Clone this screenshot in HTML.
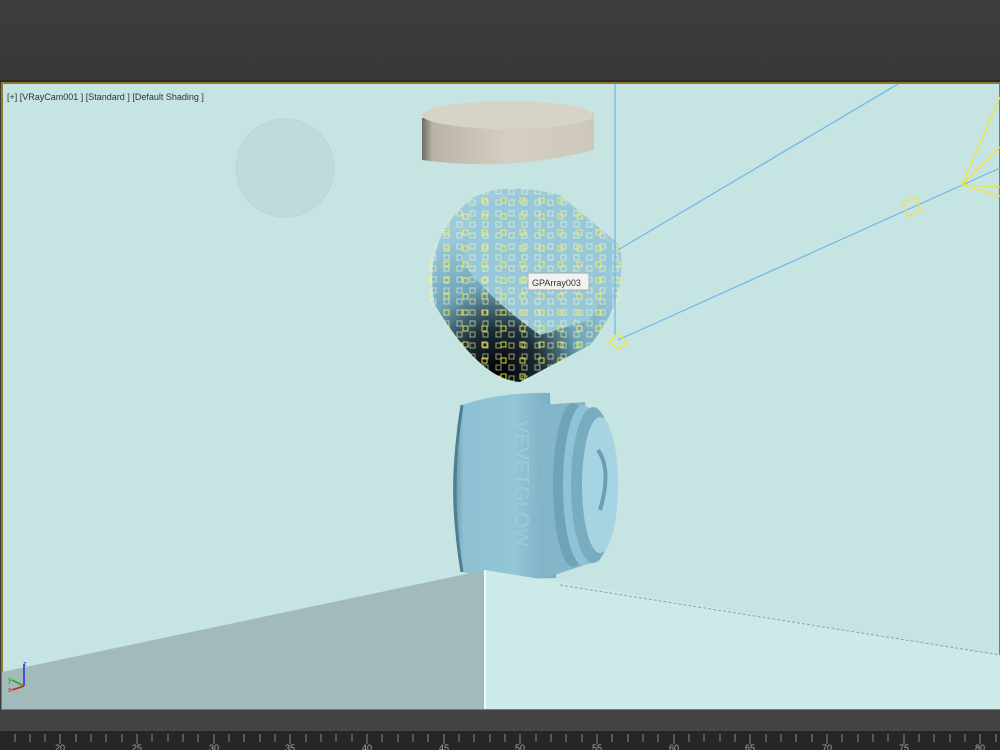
<!DOCTYPE html>
<html><head><meta charset="utf-8"><style>
html,body{margin:0;padding:0;width:1000px;height:750px;overflow:hidden;background:#3b3b3b;font-family:"Liberation Sans",sans-serif}
</style></head><body>
<svg width="1000" height="750" viewBox="0 0 1000 750" xmlns="http://www.w3.org/2000/svg" style="position:absolute;left:0;top:0">
<defs>
<linearGradient id="top" x1="0" y1="0" x2="0" y2="1"><stop offset="0" stop-color="#3d3d3d"/><stop offset="1" stop-color="#383838"/></linearGradient>
<linearGradient id="lid" x1="0" y1="0" x2="1" y2="0"><stop offset="0" stop-color="#6f6b62"/><stop offset="0.06" stop-color="#b8b3a6"/><stop offset="0.5" stop-color="#d4cfc2"/><stop offset="1" stop-color="#cdc8bb"/></linearGradient>
<linearGradient id="jar" x1="0" y1="0" x2="1" y2="0"><stop offset="0" stop-color="#5f93a5"/><stop offset="0.1" stop-color="#8cc0d2"/><stop offset="0.6" stop-color="#92c6d7"/><stop offset="1" stop-color="#76aabd"/></linearGradient>
<radialGradient id="mid" cx="0.35" cy="0.95" r="0.75"><stop offset="0" stop-color="#000"/><stop offset="0.3" stop-color="#1a2e36"/><stop offset="0.6" stop-color="#6fa6b9"/><stop offset="1" stop-color="#9ccbdc"/></radialGradient>
<pattern id="sq1" width="13" height="11" patternUnits="userSpaceOnUse"><rect x="2" y="2" width="5" height="5" fill="none" stroke="#fffbc0" stroke-width="1"/></pattern>
<pattern id="sq2" x="6" y="5" width="19" height="16" patternUnits="userSpaceOnUse"><rect x="1" y="1" width="5" height="5" fill="none" stroke="#fff455" stroke-width="1"/></pattern>
<clipPath id="jc"><path d="M470 200 Q500 180 560 195 L625 250 Q630 300 590 345 L520 385 Q480 380 430 300 Q420 240 470 200Z"/></clipPath>
</defs>
<rect width="1000" height="80" fill="url(#top)"/>
<rect x="0" y="80" width="1000" height="3" fill="#2b2b2b"/>
<rect x="2" y="83" width="998" height="626" fill="#c6e4e2" stroke="#8f7a2e" stroke-width="2"/>
<circle cx="285" cy="168" r="49" fill="#c0dcda" stroke="#bad6d4"/>
<path d="M422 118 L422 160 Q508 172 594 150 L594 112 Z" fill="url(#lid)"/>
<ellipse cx="508" cy="115" rx="86" ry="14" fill="#d8d3c7"/>
<path d="M470 200 Q500 180 560 195 L620 245 Q628 300 590 345 L520 382 Q480 380 435 305 Q422 240 470 200Z" fill="url(#mid)"/>
<path d="M475 205 Q520 188 562 200 L612 245 Q615 280 590 320 L540 335 Q490 300 462 262 Z" fill="#96c8da"/>
<g clip-path="url(#jc)" opacity="0.85"><rect x="420" y="180" width="210" height="210" fill="url(#sq1)" opacity="0.7"/><rect x="420" y="180" width="210" height="210" fill="url(#sq2)"/></g>
<rect x="528" y="273" width="61" height="17" fill="#f2f2f2" stroke="#aaa"/>
<text x="532" y="286" font-size="9" fill="#333">GPArray003</text>
<path d="M462 405 Q500 392 550 393 L556 578 Q500 580 462 572 Q444 490 462 405Z" fill="url(#jar)"/>
<path d="M462 405 Q448 490 462 572" fill="none" stroke="#4c7f92" stroke-width="3"/>
<path d="M540 405 L585 402 L600 560 L545 578 Z" fill="#82b6c8"/>
<ellipse cx="573" cy="485" rx="20" ry="82" fill="#6fa3b6"/>
<ellipse cx="583" cy="485" rx="20" ry="80" fill="#8fc3d5"/>
<ellipse cx="593" cy="485" rx="22" ry="78" fill="#78adbf"/>
<ellipse cx="600" cy="485" rx="18" ry="68" fill="#a6d4e3"/>
<path d="M598 450 Q612 470 600 510" stroke="#6a9fb2" stroke-width="4" fill="none"/>
<text x="515" y="420" font-size="20" fill="#9dcadb" transform="rotate(90 515 420)">VEVETGLOW</text>
<path d="M2 672 L485 570 L485 709 L2 709Z" fill="#a2bab9"/>
<path d="M485 570 L1000 655 L1000 709 L485 709Z" fill="#cbeae8"/>
<line x1="485" y1="570" x2="485" y2="709" stroke="#e8fbfa" stroke-width="2"/>
<line x1="560" y1="585" x2="1000" y2="655" stroke="#8aa5a4" stroke-dasharray="3 2"/>
<g stroke="#6cb8ea" stroke-width="1.2" fill="none">
<line x1="615" y1="84" x2="615" y2="335"/>
<line x1="618" y1="250" x2="898" y2="84"/>
<line x1="618" y1="340" x2="1000" y2="168"/>
</g>
<g stroke="#f2e33a" stroke-width="1.3" fill="none">
<line x1="962" y1="185" x2="1000" y2="97"/>
<line x1="962" y1="185" x2="1000" y2="147"/>
<line x1="962" y1="185" x2="1000" y2="187"/>
<line x1="962" y1="185" x2="1000" y2="196"/>
<path d="M903 202 L916 197 L921 211 L908 216 Z"/>
<path d="M617 334 L627 342 L619 350 L609 342 Z"/>
</g>
<line x1="24" y1="664" x2="24" y2="686" stroke="#2030e0" stroke-width="1.5"/>
<text x="23" y="666" font-size="7" fill="#2030e0">z</text>
<line x1="24" y1="686" x2="12" y2="680" stroke="#20a020" stroke-width="1.5"/>
<line x1="24" y1="686" x2="12" y2="690" stroke="#d02020" stroke-width="1.5"/>
<text x="8" y="682" font-size="7" fill="#20a020">y</text>
<text x="8" y="692" font-size="7" fill="#d02020">x</text>
<text x="7" y="100" font-size="9" fill="#333">[+] [VRayCam001 ] [Standard ] [Default Shading ]</text>
<rect x="0" y="710" width="1000" height="21" fill="#444"/>
<rect x="0" y="731" width="1000" height="19" fill="#262626"/>
<g stroke="#888" stroke-width="1">
<path d="M15 734v8M30 734v8M45 734v8M60 734v10M76 734v8M91 734v8M106 734v8M122 734v8M137 734v10M152 734v8M168 734v8M183 734v8M198 734v8M214 734v10M229 734v8M244 734v8M260 734v8M275 734v8M290 734v10M306 734v8M321 734v8M336 734v8M352 734v8M367 734v10M382 734v8M398 734v8M413 734v8M428 734v8M444 734v10M459 734v8M474 734v8M490 734v8M505 734v8M520 734v10M536 734v8M551 734v8M566 734v8M582 734v8M597 734v10M612 734v8M628 734v8M643 734v8M658 734v8M674 734v10M689 734v8M704 734v8M720 734v8M735 734v8M750 734v10M766 734v8M781 734v8M796 734v8M812 734v8M827 734v10M842 734v8M858 734v8M873 734v8M888 734v8M904 734v10M919 734v8M934 734v8M950 734v8M965 734v8M980 734v10M996 734v8"/>
</g>
<g font-size="9" fill="#aaa" text-anchor="middle">
<text x="60" y="751">20</text><text x="137" y="751">25</text><text x="214" y="751">30</text><text x="290" y="751">35</text><text x="367" y="751">40</text><text x="444" y="751">45</text><text x="520" y="751">50</text><text x="597" y="751">55</text><text x="674" y="751">60</text><text x="750" y="751">65</text><text x="827" y="751">70</text><text x="904" y="751">75</text><text x="980" y="751">80</text>
</g>
</svg>
</body></html>
